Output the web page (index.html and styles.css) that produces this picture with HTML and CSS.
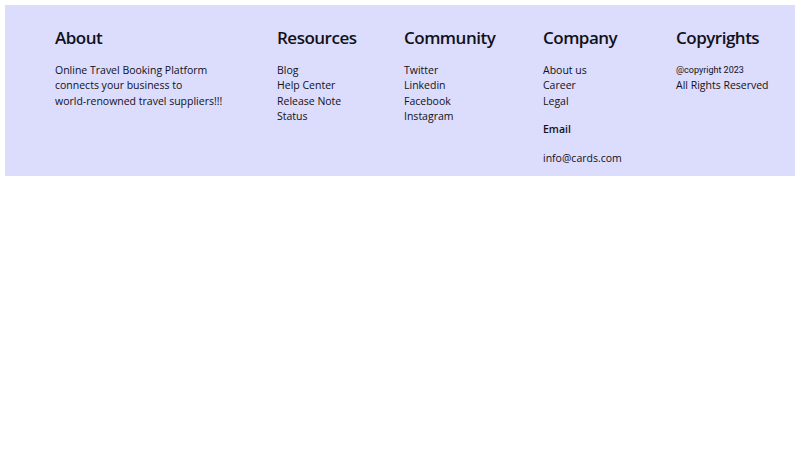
FILE: index.html
```html
<!DOCTYPE html>
<html lang="en">
<head>
<meta charset="utf-8">
<title>Footer</title>
<link rel="stylesheet" href="styles.css">
</head>
<body>
<footer class="footer">
  <div class="col col-about">
    <h3 class="col-title">About</h3>
    <p class="about-text">Online Travel Booking Platform<br>connects your business to<br>world-renowned travel suppliers!!!</p>
  </div>
  <div class="col">
    <h3 class="col-title">Resources</h3>
    <ul class="links">
      <li>Blog</li>
      <li>Help Center</li>
      <li>Release Note</li>
      <li>Status</li>
    </ul>
  </div>
  <div class="col">
    <h3 class="col-title">Community</h3>
    <ul class="links">
      <li>Twitter</li>
      <li>Linkedin</li>
      <li>Facebook</li>
      <li>Instagram</li>
    </ul>
  </div>
  <div class="col">
    <h3 class="col-title">Company</h3>
    <ul class="links">
      <li>About us</li>
      <li>Career</li>
      <li>Legal</li>
    </ul>
    <p class="email-label">Email</p>
    <p class="email">info@cards.com</p>
  </div>
  <div class="col">
    <h3 class="col-title">Copyrights</h3>
    <p class="copy-small">@copyright 2023</p>
    <p class="copy">All Rights Reserved</p>
  </div>
</footer>
</body>
</html>
```
FILE: styles.css
```css
html, body {
  margin: 0;
  padding: 0;
  background: #ffffff;
}
body {
  padding: 5px;
  font-family: "Open Sans", "Noto Sans", sans-serif;
  color: #111118;
}
.footer {
  background: #dcdcfc;
  height: 171px;
  box-sizing: border-box;
  padding: 21px 0 0 50px;
  display: grid;
  grid-template-columns: 222px 127px 139px 133px 1fr;
  align-items: start;
}
.col-title {
  margin: 0 0 12.5px;
  font-size: 17px;
  line-height: 24px;
  font-weight: 600;
  letter-spacing: -0.5px;
}
.about-text, .links, .email, .copy, .copy-small, .email-label {
  margin: 0;
  padding: 0;
  font-size: 10.5px;
  line-height: 15.5px;
}
.links {
  list-style: none;
}
.email-label {
  font-weight: 600;
  margin-top: 13px;
}
.email {
  margin-top: 13px;
}
.copy-small {
  font-family: Roboto, "Noto Sans", sans-serif;
  font-size: 9px;
}
```
